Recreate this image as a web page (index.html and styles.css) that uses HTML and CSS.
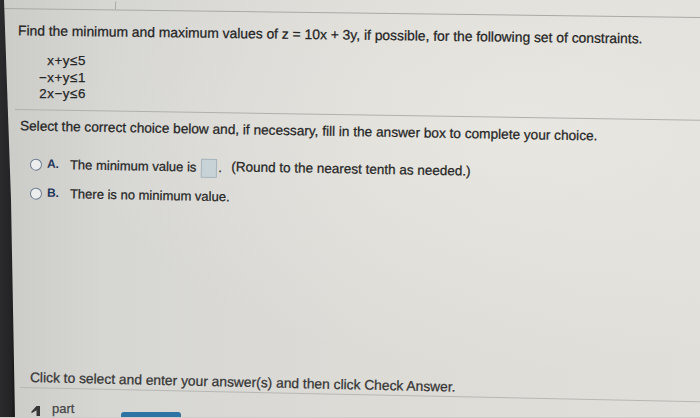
FILE: index.html
```html
<!DOCTYPE html>
<html>
<head>
<meta charset="utf-8">
<link rel="stylesheet" href="styles.css">
</head>
<body>
<div class="screen">
  <div class="topbar"><div class="tab"></div></div>
  <p class="title">Find the minimum and maximum values of z = 10x + 3y, if possible, for the following set of constraints.</p>
  <div class="cons">
    <div class="c">x+y≤5</div>
    <div class="c">−x+y≤1</div>
    <div class="c">2x−y≤6</div>
  </div>
  <div class="rule rule2"></div>
  <p class="select">Select the correct choice below and, if necessary, fill in the answer box to complete your choice.</p>
  <div class="options">
    <div class="opt">
      <span class="radio"></span>
      <span class="letter">A.</span>
      <span class="txt">The minimum value is<span class="box"></span>.&nbsp; <span class="round">(Round to the nearest tenth as needed.)</span></span>
    </div>
    <div class="opt">
      <span class="radio"></span>
      <span class="letter">B.</span>
      <span class="txt">There is no minimum value.</span>
    </div>
  </div>
  <div class="footer">
    <p class="click">Click to select and enter your answer(s) and then click Check Answer.</p>
    <div class="rule rule3"></div>
    <div class="partrow">
      <svg class="picon" width="10" height="10" viewBox="0 0 10 10"><path d="M5.5 0 H9 V10 H5.5 V4.2 L0.5 7.2 V5.6 Z" fill="#363636"/></svg>
      <span class="part">part</span>
      <span class="btn"></span>
    </div>
  </div>
</div>
<div class="bezel"></div>
<div class="bottomedge"></div>
</body>
</html>
```

FILE: styles.css
```css
* { box-sizing: border-box; }

body {
  margin: 0;
  width: 700px;
  height: 418px;
  overflow: hidden;
  position: relative;
  font-family: "Liberation Sans", Arial, sans-serif;
  font-size: 13px;
  color: #262626;
  -webkit-text-stroke: 0.25px currentColor;
  background:
    radial-gradient(ellipse at 75% 30%, rgba(240,238,232,0.55), rgba(240,238,232,0) 60%),
    linear-gradient(90deg, #cbcbc8 0%, #d6d6d3 15%, #dcdbd6 50%, #e1dfda 100%);
}

p { margin: 0; }

.screen {
  width: 700px;
  height: 418px;
  overflow: hidden;
  display: flex;
  flex-direction: column;
}

.topbar {
  flex: none;
  width: 700px;
  height: 9px;
  border-bottom: 1px solid #a9a9a6;
  transform: rotate(0.74deg);
  transform-origin: 0 100%;
}

.tab {
  width: 116px;
  height: 8px;
  border-right: 1px solid #a9a9a6;
}

.title {
  margin-top: 13px;
  padding-left: 18px;
  font-size: 13.85px;
  line-height: 16px;
  white-space: nowrap;
  color: #242424;
  transform: rotate(0.75deg);
  transform-origin: 0 50%;
}

.cons {
  margin: 15px 0 0 39px;
  width: 47px;
  display: flex;
  flex-direction: column;
  align-items: flex-end;
  font-size: 13.3px;
  line-height: 16.5px;
  letter-spacing: 0.6px;
}

.rule {
  height: 0;
  border-top: 1px solid #b0b0ad;
  transform-origin: 0 50%;
}

.rule2 {
  width: 685px;
  margin-top: 6px;
  margin-left: 15px;
  transform: rotate(0.9deg);
}

.select {
  margin-top: 8.5px;
  padding-left: 20px;
  font-size: 13.65px;
  line-height: 16px;
  white-space: nowrap;
  transform: rotate(1deg);
  transform-origin: 0 50%;
}

.options {
  margin-top: 18.5px;
}

.opt {
  display: flex;
  align-items: center;
  height: 22px;
  padding-left: 30px;
  white-space: nowrap;
  transform: rotate(1.05deg);
  transform-origin: 0 50%;
}

.opt + .opt { margin-top: 7.5px; }

.radio {
  flex: none;
  width: 12px;
  height: 12px;
  border: 1.5px solid #6c7b90;
  border-radius: 50%;
  background: #eceeee;
  -webkit-text-stroke: 0;
}

.letter {
  margin-left: 5px;
  width: 23px;
  margin-bottom: 3px;
  font-size: 12px;
  font-weight: bold;
  color: #1f3558;
  -webkit-text-stroke: 0;
}

.txt { line-height: 16px; }

.round {
  font-size: 13.5px;
  margin-left: 2px;
}

.box {
  display: inline-block;
  width: 16px;
  height: 19px;
  margin: 0 1px 0 5px;
  vertical-align: middle;
  background: #c8d3d8;
  border: 1px solid #a8b5bc;
}

.footer {
  margin-top: auto;
  padding-left: 30px;
}

.click {
  font-size: 13.8px;
  line-height: 16px;
  white-space: nowrap;
  color: #353535;
  transform: rotate(1.3deg);
  transform-origin: 0 50%;
}

.rule3 {
  width: 680px;
  margin-top: 1.5px;
  margin-left: -10px;
  border-top-color: #b7b7b4;
  transform: rotate(1.2deg);
}

.partrow {
  margin-top: 13px;
  height: 17px;
  display: flex;
  align-items: flex-start;
}

.picon {
  margin: 5px 0 0 1px;
}

.part {
  margin-left: 11px;
  line-height: 16px;
  color: #474747;
}

.btn {
  margin: 11px 0 0 47px;
  width: 60px;
  height: 10px;
  border-radius: 3px 3px 0 0;
  background: #2d73a4;
}

.bezel {
  position: absolute;
  left: 0;
  top: 0;
  width: 16px;
  height: 418px;
  background: linear-gradient(90deg, #2b2b2d 0%, #232325 70%, #111 100%);
  clip-path: polygon(0 0, 4px 0, 11px 200px, 15px 418px, 0 418px);
}

.bottomedge {
  position: absolute;
  left: 0;
  right: 0;
  bottom: 0;
  height: 1.5px;
  background: #cdcdcb;
}
```
